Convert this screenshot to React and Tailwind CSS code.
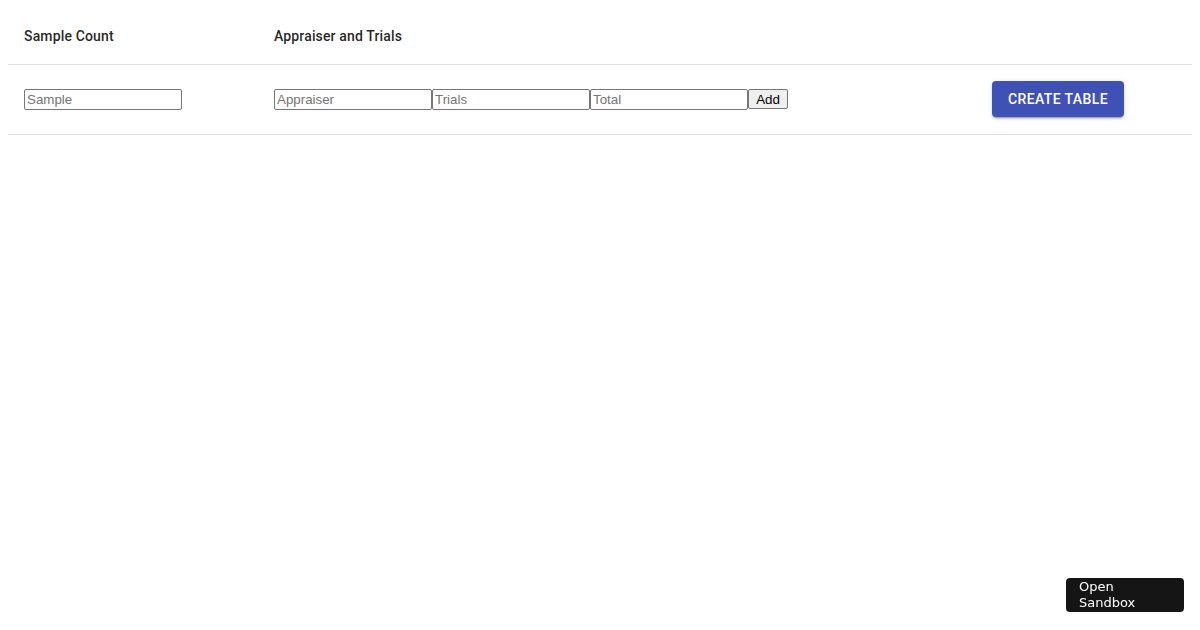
export default function App() {
  const inputCls =
    "w-[158px] h-[21px] border border-[#767676] rounded-[2px] px-[2px] py-[1px] text-[13.33px] font-['Liberation_Sans',Arial,sans-serif] text-black placeholder:text-[#757575] bg-white outline-none";
  return (
    <div className="min-h-screen bg-white p-2 font-['Roboto',sans-serif]">
      <table className="w-full border-collapse">
        <thead>
          <tr className="border-b border-[#e0e0e0]">
            <th className="w-[250px] h-[56px] px-4 text-left text-sm font-medium tracking-[0.01071em] text-black/[0.87]">
              Sample Count
            </th>
            <th className="px-4 text-left text-sm font-medium tracking-[0.01071em] text-black/[0.87]">
              Appraiser and Trials
            </th>
            <th className="w-[216px] px-4"></th>
          </tr>
        </thead>
        <tbody>
          <tr className="border-b border-[#e0e0e0]">
            <td className="h-[70px] px-4 align-middle">
              <input className={inputCls} placeholder="Sample" />
            </td>
            <td className="px-4 align-middle">
              <div className="flex items-center">
                <input className={inputCls} placeholder="Appraiser" />
                <input className={inputCls} placeholder="Trials" />
                <input className={inputCls} placeholder="Total" />
                <button className="h-[20px] w-[40px] border border-[#767676] rounded-[2px] bg-[#efefef] pt-[1px] text-[13.33px] font-['Liberation_Sans',Arial,sans-serif] text-black leading-none">
                  Add
                </button>
              </div>
            </td>
            <td className="px-4 align-middle">
              <button className="h-[36px] w-[132px] rounded bg-[#3f51b5] text-sm font-medium uppercase tracking-[0.02857em] text-white shadow-[0_3px_1px_-2px_rgba(0,0,0,0.2),0_2px_2px_0_rgba(0,0,0,0.14),0_1px_5px_0_rgba(0,0,0,0.12)]">
                Create Table
              </button>
            </td>
          </tr>
        </tbody>
      </table>
      <button className="fixed right-4 bottom-[18px] w-[118px] h-[34px] rounded bg-[#151515] pl-[13px] pr-[30px] text-left text-[13px] leading-[16px] text-white font-['DejaVu_Sans',sans-serif]">
        Open Sandbox
      </button>
    </div>
  );
}
